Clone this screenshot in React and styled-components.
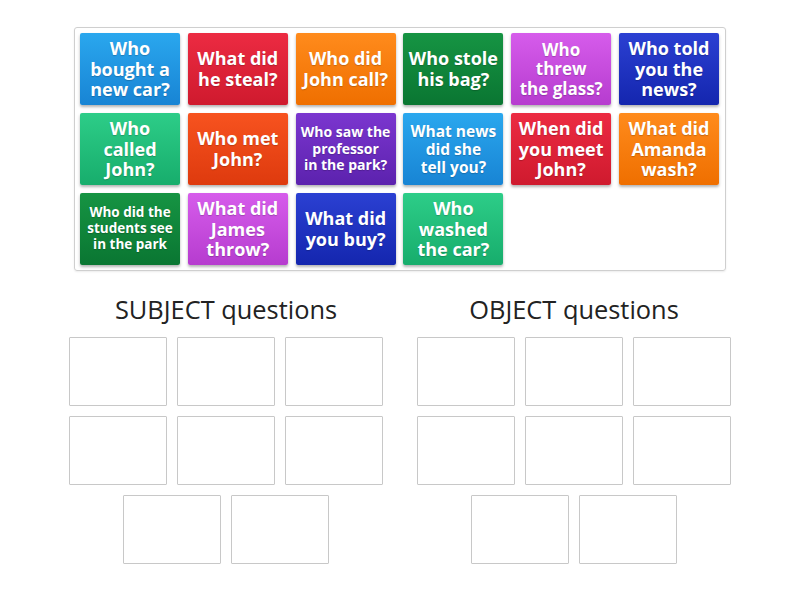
import styled, { createGlobalStyle } from 'styled-components'

const GlobalStyle = createGlobalStyle`
  html, body {
    margin: 0;
    padding: 0;
    background: #fff;
  }
  body {
    font-family: 'Open Sans', 'DejaVu Sans', sans-serif;
  }
`

const palette = {
  sky: ['#2aa7ee', '#1884d4'],
  red: ['#ec2b42', '#cf1a2e'],
  orange: ['#ff8b1c', '#ef6f00'],
  forest: ['#169443', '#0a7632'],
  orchid: ['#d65ceb', '#b63ccf'],
  navy: ['#2b40d2', '#1426ae'],
  mint: ['#2dcd88', '#17ad6c'],
  flame: ['#f7531f', '#de3a0e'],
  violet: ['#7b36cf', '#5c22ae'],
}

const tiles = [
  { color: 'sky', lines: ['Who', 'bought a', 'new car?'] },
  { color: 'red', lines: ['What did', 'he steal?'] },
  { color: 'orange', lines: ['Who did', 'John call?'] },
  { color: 'forest', lines: ['Who stole', 'his bag?'] },
  { color: 'orchid', size: 17, lines: ['Who', 'threw', 'the glass?'] },
  { color: 'navy', lines: ['Who told', 'you the', 'news?'] },
  { color: 'mint', lines: ['Who', 'called', 'John?'] },
  { color: 'flame', lines: ['Who met', 'John?'] },
  { color: 'violet', size: 14, lines: ['Who saw the', 'professor', 'in the park?'] },
  { color: 'sky', size: 15.5, lines: ['What news', 'did she', 'tell you?'] },
  { color: 'red', lines: ['When did', 'you meet', 'John?'] },
  { color: 'orange', lines: ['What did', 'Amanda', 'wash?'] },
  { color: 'forest', size: 13.5, lines: ['Who did the', 'students see', 'in the park'] },
  { color: 'orchid', lines: ['What did', 'James', 'throw?'] },
  { color: 'navy', lines: ['What did', 'you buy?'] },
  { color: 'mint', lines: ['Who', 'washed', 'the car?'] },
]

const groups = ['SUBJECT questions', 'OBJECT questions']

const App = () => {
  return (
    <>
      <GlobalStyle />
      <Page>
        <TilePanel>
          {tiles.map((tile, index) => (
            <Tile key={index} $color={tile.color} $size={tile.size || 18}>
              {tile.lines.map((line, i) => (
                <span key={i}>{line}</span>
              ))}
            </Tile>
          ))}
        </TilePanel>

        <Groups>
          {groups.map((title) => (
            <Group key={title}>
              <GroupTitle>{title}</GroupTitle>
              <DropGrid>
                {Array.from({ length: 8 }).map((_, i) => (
                  <DropBox key={i} />
                ))}
              </DropGrid>
            </Group>
          ))}
        </Groups>
      </Page>
    </>
  )
}

export default App

const Page = styled.div`
  width: 800px;
  height: 600px;
  display: flex;
  flex-direction: column;
  align-items: center;
  padding-top: 27px;
  box-sizing: border-box;
  overflow: hidden;
`

const TilePanel = styled.div`
  display: grid;
  grid-template-columns: repeat(6, 100px);
  grid-auto-rows: 72px;
  gap: 8px 7.8px;
  padding: 5px 6px 5px 5px;
  border: 1px solid #cfcfcf;
  border-radius: 3px;
  box-shadow: 0 1px 2px rgba(0, 0, 0, 0.08);
`

const Tile = styled.div`
  display: flex;
  flex-direction: column;
  align-items: center;
  justify-content: center;
  border-radius: 2px;
  color: #fff;
  font-weight: 700;
  font-size: ${(p) => p.$size}px;
  line-height: ${(p) => (p.$size >= 17 ? 1.14 : 1.17)};
  white-space: nowrap;
  text-align: center;
  text-shadow: 0 1px 1px rgba(0, 0, 0, 0.2);
  background: linear-gradient(
    to bottom,
    ${(p) => palette[p.$color][0]},
    ${(p) => palette[p.$color][1]}
  );
  box-shadow: 0 2px 3px rgba(0, 0, 0, 0.3);
`

const Groups = styled.div`
  display: flex;
  gap: 34px;
  margin-top: 22px;
`

const Group = styled.div`
  display: flex;
  flex-direction: column;
  align-items: center;
  width: 314px;
`

const GroupTitle = styled.div`
  font-size: 25.4px;
  line-height: 32px;
  color: #222;
  margin-bottom: 12px;
`

const DropGrid = styled.div`
  display: flex;
  flex-wrap: wrap;
  justify-content: center;
  gap: 10px;
  width: 314px;
`

const DropBox = styled.div`
  width: 98px;
  height: 69px;
  box-sizing: border-box;
  border: 1px solid #c8c8c8;
  border-radius: 1px;
`
